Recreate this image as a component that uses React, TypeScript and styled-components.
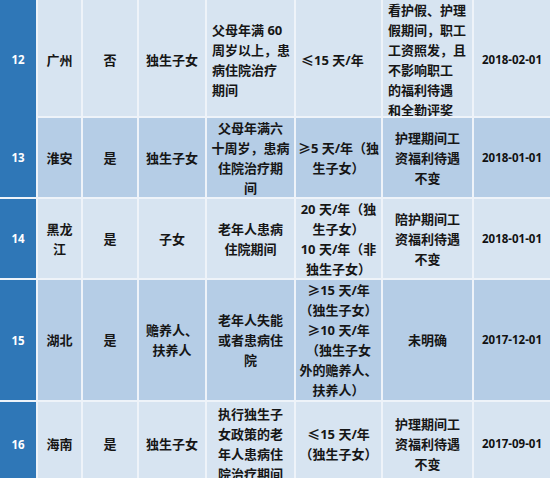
import React from "react";
import styled, { createGlobalStyle } from "styled-components";

const Global = createGlobalStyle`
  html, body {
    margin: 0;
    padding: 0;
    background: #ffffff;
    overflow: hidden;
  }
  body {
    font-family: "Noto Sans", "Noto Sans CJK SC", sans-serif;
  }
`;

const LINE = "#eef3f9";

const Table = styled.div`
  display: flex;
  flex-direction: column;
  width: 550px;
  background: ${LINE};
`;

const Row = styled.div<{ $h: number }>`
  display: grid;
  grid-template-columns: 36px 43px 54px 66px 87px 85px 89px 76px;
  column-gap: 2px;
  height: ${(p) => p.$h}px;
  border-bottom: 2px solid ${LINE};
  background: ${LINE};
`;

const Cell = styled.div<{ $tone: "light" | "dark"; $left?: boolean; $top?: number }>`
  display: flex;
  flex-direction: column;
  justify-content: center;
  align-items: ${(p) => (p.$left ? "flex-start" : "center")};
  text-align: ${(p) => (p.$left ? "left" : "center")};
  padding: ${(p) => p.$top ?? 0}px ${(p) => (p.$left ? "5px" : "0")} 0;
  background: ${(p) => (p.$tone === "light" ? "#d7e4f1" : "#b5cde6")};
  color: #161616;
  font-size: 13px;
  line-height: 20px;
  font-weight: 700;
  overflow: hidden;
  min-width: 0;
`;

const NumCell = styled.div<{ $joined?: boolean; $top?: number }>`
  display: flex;
  align-items: center;
  justify-content: center;
  padding-top: ${(p) => p.$top ?? 0}px;
  background: #2f77b7;
  color: #ffffff;
  font-size: 11.5px;
  font-weight: 700;
  box-shadow: ${(p) => (p.$joined ? "0 2px 0 #2f77b7" : "none")};
`;

const Line = styled.span`
  display: block;
  white-space: nowrap;
`;

const DateText = styled.span`
  font-size: 11.5px;
  font-weight: 700;
  color: #111111;
`;

type RowData = {
  num: string;
  h: number;
  tone: "light" | "dark";
  top?: number;
  joined?: boolean;
  leftCols?: number[];
  cells: string[][];
  date: string;
};

const rows: RowData[] = [
  {
    num: "12",
    h: 116,
    tone: "light",
    top: 3,
    joined: true,
    leftCols: [3, 4, 5],
    cells: [
      ["广州"],
      ["否"],
      ["独生子女"],
      ["父母年满 60", "周岁以上，患", "病住院治疗", "期间"],
      ["≤15 天/年"],
      ["看护假、护理", "假期间，职工", "工资照发，且", "不影响职工", "的福利待遇", "和全勤评奖"],
    ],
    date: "2018-02-01",
  },
  {
    num: "13",
    h: 79,
    tone: "dark",
    cells: [
      ["淮安"],
      ["是"],
      ["独生子女"],
      ["父母年满六", "十周岁，患病", "住院治疗期", "间"],
      ["≥5 天/年（独", "生子女）"],
      ["护理期间工", "资福利待遇", "不变"],
    ],
    date: "2018-01-01",
  },
  {
    num: "14",
    h: 79,
    tone: "light",
    cells: [
      ["黑龙", "江"],
      ["是"],
      ["子女"],
      ["老年人患病", "住院期间"],
      ["20 天/年（独", "生子女）", "10 天/年（非", "独生子女）"],
      ["陪护期间工", "资福利待遇", "不变"],
    ],
    date: "2018-01-01",
  },
  {
    num: "15",
    h: 120,
    tone: "dark",
    cells: [
      ["湖北"],
      ["是"],
      ["赡养人、", "扶养人"],
      ["老年人失能", "或者患病住", "院"],
      ["≥15 天/年", "（独生子女）", "≥10 天/年", "（独生子女", "外的赡养人、", "扶养人）"],
      ["未明确"],
    ],
    date: "2017-12-01",
  },
  {
    num: "16",
    h: 84,
    tone: "light",
    cells: [
      ["海南"],
      ["是"],
      ["独生子女"],
      ["执行独生子", "女政策的老", "年人患病住", "院治疗期间"],
      ["≤15 天/年", "（独生子女）"],
      ["护理期间工", "资福利待遇", "不变"],
    ],
    date: "2017-09-01",
  },
];

export default function App() {
  return (
    <>
      <Global />
      <Table>
        {rows.map((r) => (
          <Row key={r.num} $h={r.h}>
            <NumCell $joined={r.joined} $top={r.top}>
              {r.num}
            </NumCell>
            {r.cells.map((lines, i) => (
              <Cell
                key={i}
                $tone={r.tone}
                $top={r.top}
                $left={r.leftCols?.includes(i)}
              >
                {lines.map((l, j) => (
                  <Line key={j}>{l}</Line>
                ))}
              </Cell>
            ))}
            <Cell $tone={r.tone} $top={r.top}>
              <DateText>{r.date}</DateText>
            </Cell>
          </Row>
        ))}
      </Table>
    </>
  );
}
